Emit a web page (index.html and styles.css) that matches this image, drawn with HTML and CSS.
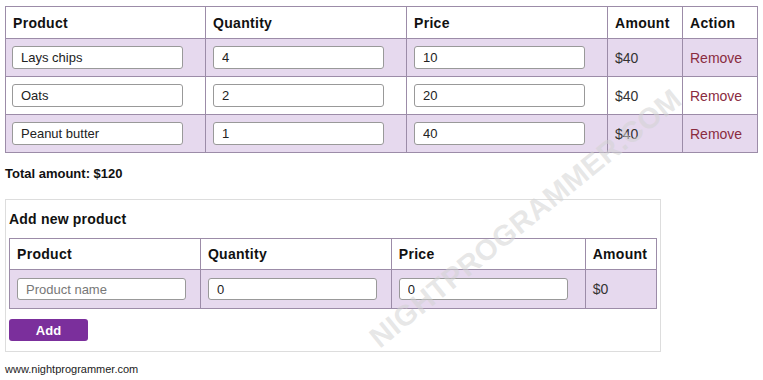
FILE: index.html
```html
<!DOCTYPE html>
<html lang="en">
<head>
  <meta charset="UTF-8">
  <meta name="viewport" content="width=device-width, initial-scale=1.0">
  <title>Shopping cart</title>
  <link rel="stylesheet" href="styles.css">
</head>
<body>
  <table class="cart">
    <thead>
      <tr>
        <th class="col-product">Product</th>
        <th class="col-qty">Quantity</th>
        <th class="col-price">Price</th>
        <th class="col-amount">Amount</th>
        <th class="col-action">Action</th>
      </tr>
    </thead>
    <tbody>
      <tr class="alt">
        <td><input type="text" value="Lays chips"></td>
        <td><input type="text" value="4"></td>
        <td><input type="text" value="10"></td>
        <td>$40</td>
        <td><a class="remove" href="#">Remove</a></td>
      </tr>
      <tr>
        <td><input type="text" value="Oats"></td>
        <td><input type="text" value="2"></td>
        <td><input type="text" value="20"></td>
        <td>$40</td>
        <td><a class="remove" href="#">Remove</a></td>
      </tr>
      <tr class="alt">
        <td><input type="text" value="Peanut butter"></td>
        <td><input type="text" value="1"></td>
        <td><input type="text" value="40"></td>
        <td>$40</td>
        <td><a class="remove" href="#">Remove</a></td>
      </tr>
    </tbody>
  </table>

  <p class="total">Total amount: $120</p>

  <div class="add-box">
    <h3>Add new product</h3>
    <table class="cart add-table">
      <thead>
        <tr>
          <th class="col-product">Product</th>
          <th class="col-qty">Quantity</th>
          <th class="col-price">Price</th>
          <th class="col-amount">Amount</th>
        </tr>
      </thead>
      <tbody>
        <tr class="alt">
          <td><input type="text" placeholder="Product name"></td>
          <td><input type="text" value="0"></td>
          <td><input type="text" value="0"></td>
          <td>$0</td>
        </tr>
      </tbody>
    </table>
    <button class="add-btn">Add</button>
  </div>

  <p class="footer">www.nightprogrammer.com</p>

  <div class="watermark">NIGHTPROGRAMMER.COM</div>
</body>
</html>
```

FILE: styles.css
```css
body { font-family: "Liberation Sans", Arial, sans-serif; margin: 0; padding: 6px 5px 0; color: #111; position: relative; }

.cart { border-collapse: collapse; width: 753px; font-size: 14px; }
.cart th, .cart td { border: 1px solid #9c8ca8; text-align: left; padding: 0 7px; }
.cart th { height: 31px; font-weight: bold; letter-spacing: 0.3px; color: #111; }
.cart td { height: 37px; color: #333; }
.cart tr.alt td { background-color: #e6d9ee; }
.cart .col-product { width: 185px; }
.cart .col-qty { width: 186px; }
.cart .col-price { width: 186px; }
.cart .col-amount { width: 60px; }

.cart input { width: 171px; height: 23px; box-sizing: border-box; padding: 2px 8px; border: 1px solid #999; border-radius: 3px; font-family: "Liberation Sans", Arial, sans-serif; font-size: 13px; color: #222; background: #fff; }
.cart td:first-child input { margin-left: -1px; }
.cart input::placeholder { color: #777; }

.remove { color: #8a2c3f; text-decoration: none; }

.total { font-size: 13px; font-weight: bold; margin: 13px 0 0; }

.add-box { width: 647px; border: 1px solid #ddd; margin-top: 18px; padding: 1px 4px 10px 3px; }
.add-box h3 { font-size: 14px; margin: 10px 0 11px 0; letter-spacing: 0.2px; }
.add-table { width: 648px; }
.add-table th { height: 30px; }
.add-table .col-product { width: 175px; }
.add-table .col-qty { width: 175px; }
.add-table .col-price { width: 178px; }
.add-table .col-amount { width: 56px; }
.add-table td { height: 38px; }
.add-table td, .add-table th { padding: 0 7px; }
.add-table input { width: 169px; height: 22px; }
.add-table td:first-child input { margin-left: 0; }

.add-btn { margin-top: 10px; width: 79px; height: 22px; background-color: #7b2f9c; color: #fff; border: none; border-radius: 3px; font-family: "Liberation Sans", Arial, sans-serif; font-size: 13px; font-weight: bold; cursor: pointer; }

.footer { font-size: 11px; margin: 11px 0 0; color: #222; }

.watermark { position: absolute; left: 328px; top: 196px; width: 410px; font-size: 29px; font-weight: bold; color: rgba(210, 210, 210, 0.55); letter-spacing: 0.5px; transform: rotate(-39deg); white-space: nowrap; pointer-events: none; }
```
